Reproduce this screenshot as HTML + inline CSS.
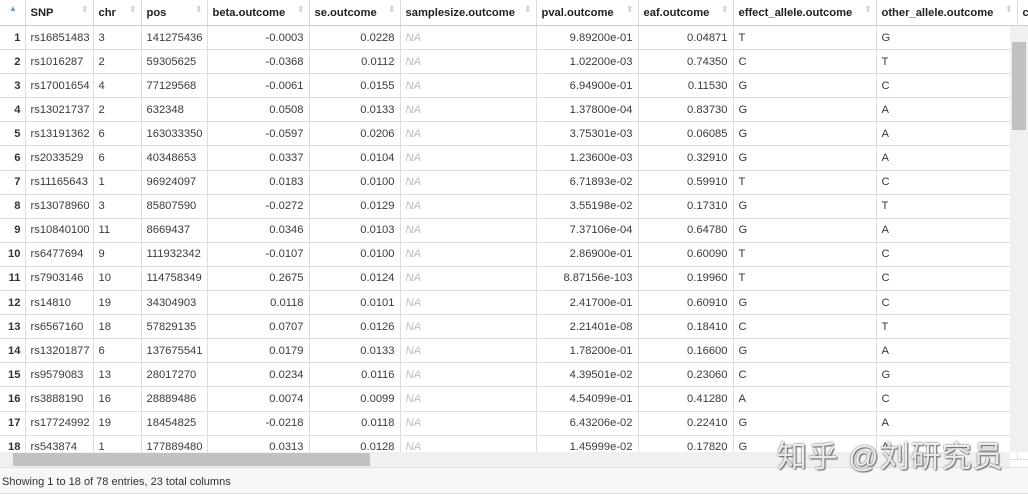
<!DOCTYPE html>
<html><head><meta charset="utf-8"><style>
body{margin:0;width:1028px;height:496px;overflow:hidden;background:#fff;font-family:"Liberation Sans","Noto Sans CJK SC",sans-serif;font-size:11.2px;color:#3a3a3a;position:relative}
table{border-collapse:collapse;table-layout:fixed;position:absolute;left:0;top:0;width:1040px}
td,th{height:23.1px;border-right:1px solid #ddd;border-bottom:1px solid #ddd;padding:0 5px;white-space:nowrap;overflow:hidden;text-align:left}
th{height:25px;font-weight:bold;color:#222;position:relative;border-bottom:1px solid #ccc}
th:after{content:"⬍";position:absolute;right:4px;top:4px;font-size:9px;color:#d0d0d0;font-weight:normal}
th.s:after{content:"▲";left:9px;font-size:8px;color:#5b9bd5}
td.n{text-align:right;font-weight:bold;color:#333;padding-right:4px}
td.r{text-align:right}
td.na{color:#bbb;font-style:italic}
.vs{position:absolute;left:1010px;top:26px;width:18px;height:426px;background:#f0f0f0}
.vs .t{position:absolute;left:2px;top:16px;width:14px;height:88px;background:#c1c1c1}
.hs{position:absolute;left:0;top:452px;width:1010px;height:15px;background:#f0f0f0}
.hs .t{position:absolute;left:13px;top:1px;width:357px;height:13px;background:#c1c1c1}
.ft{position:absolute;left:0;top:467px;width:1028px;height:25px;background:#f6f7f7;border-top:1px solid #e0e0e0;border-bottom:1px solid #ddd}
.ft span{position:absolute;left:2px;top:8px;font-size:11px;color:#333}
.wm{position:absolute;left:777px;top:432px;font-size:30px;color:rgba(255,255,255,.85);text-shadow:0 0 2px #555,1px 1px 1px #777;letter-spacing:1px}
</style></head><body>
<table>
<colgroup><col style="width:25px"><col style="width:68px"><col style="width:48px"><col style="width:66px"><col style="width:102px"><col style="width:91px"><col style="width:136px"><col style="width:102px"><col style="width:95px"><col style="width:143px"><col style="width:141px"><col style="width:23px"></colgroup>
<tr><th class="s"></th><th>SNP</th><th>chr</th><th>pos</th><th>beta.outcome</th><th>se.outcome</th><th>samplesize.outcome</th><th>pval.outcome</th><th>eaf.outcome</th><th>effect_allele.outcome</th><th>other_allele.outcome</th><th>c</th></tr>
<tr><td class="n">1</td><td>rs16851483</td><td>3</td><td>141275436</td><td class="r">-0.0003</td><td class="r">0.0228</td><td class="na">NA</td><td class="r">9.89200e-01</td><td class="r">0.04871</td><td>T</td><td>G</td><td></td></tr>
<tr><td class="n">2</td><td>rs1016287</td><td>2</td><td>59305625</td><td class="r">-0.0368</td><td class="r">0.0112</td><td class="na">NA</td><td class="r">1.02200e-03</td><td class="r">0.74350</td><td>C</td><td>T</td><td></td></tr>
<tr><td class="n">3</td><td>rs17001654</td><td>4</td><td>77129568</td><td class="r">-0.0061</td><td class="r">0.0155</td><td class="na">NA</td><td class="r">6.94900e-01</td><td class="r">0.11530</td><td>G</td><td>C</td><td></td></tr>
<tr><td class="n">4</td><td>rs13021737</td><td>2</td><td>632348</td><td class="r">0.0508</td><td class="r">0.0133</td><td class="na">NA</td><td class="r">1.37800e-04</td><td class="r">0.83730</td><td>G</td><td>A</td><td></td></tr>
<tr><td class="n">5</td><td>rs13191362</td><td>6</td><td>163033350</td><td class="r">-0.0597</td><td class="r">0.0206</td><td class="na">NA</td><td class="r">3.75301e-03</td><td class="r">0.06085</td><td>G</td><td>A</td><td></td></tr>
<tr><td class="n">6</td><td>rs2033529</td><td>6</td><td>40348653</td><td class="r">0.0337</td><td class="r">0.0104</td><td class="na">NA</td><td class="r">1.23600e-03</td><td class="r">0.32910</td><td>G</td><td>A</td><td></td></tr>
<tr><td class="n">7</td><td>rs11165643</td><td>1</td><td>96924097</td><td class="r">0.0183</td><td class="r">0.0100</td><td class="na">NA</td><td class="r">6.71893e-02</td><td class="r">0.59910</td><td>T</td><td>C</td><td></td></tr>
<tr><td class="n">8</td><td>rs13078960</td><td>3</td><td>85807590</td><td class="r">-0.0272</td><td class="r">0.0129</td><td class="na">NA</td><td class="r">3.55198e-02</td><td class="r">0.17310</td><td>G</td><td>T</td><td></td></tr>
<tr><td class="n">9</td><td>rs10840100</td><td>11</td><td>8669437</td><td class="r">0.0346</td><td class="r">0.0103</td><td class="na">NA</td><td class="r">7.37106e-04</td><td class="r">0.64780</td><td>G</td><td>A</td><td></td></tr>
<tr><td class="n">10</td><td>rs6477694</td><td>9</td><td>111932342</td><td class="r">-0.0107</td><td class="r">0.0100</td><td class="na">NA</td><td class="r">2.86900e-01</td><td class="r">0.60090</td><td>T</td><td>C</td><td></td></tr>
<tr><td class="n">11</td><td>rs7903146</td><td>10</td><td>114758349</td><td class="r">0.2675</td><td class="r">0.0124</td><td class="na">NA</td><td class="r">8.87156e-103</td><td class="r">0.19960</td><td>T</td><td>C</td><td></td></tr>
<tr><td class="n">12</td><td>rs14810</td><td>19</td><td>34304903</td><td class="r">0.0118</td><td class="r">0.0101</td><td class="na">NA</td><td class="r">2.41700e-01</td><td class="r">0.60910</td><td>G</td><td>C</td><td></td></tr>
<tr><td class="n">13</td><td>rs6567160</td><td>18</td><td>57829135</td><td class="r">0.0707</td><td class="r">0.0126</td><td class="na">NA</td><td class="r">2.21401e-08</td><td class="r">0.18410</td><td>C</td><td>T</td><td></td></tr>
<tr><td class="n">14</td><td>rs13201877</td><td>6</td><td>137675541</td><td class="r">0.0179</td><td class="r">0.0133</td><td class="na">NA</td><td class="r">1.78200e-01</td><td class="r">0.16600</td><td>G</td><td>A</td><td></td></tr>
<tr><td class="n">15</td><td>rs9579083</td><td>13</td><td>28017270</td><td class="r">0.0234</td><td class="r">0.0116</td><td class="na">NA</td><td class="r">4.39501e-02</td><td class="r">0.23060</td><td>C</td><td>G</td><td></td></tr>
<tr><td class="n">16</td><td>rs3888190</td><td>16</td><td>28889486</td><td class="r">0.0074</td><td class="r">0.0099</td><td class="na">NA</td><td class="r">4.54099e-01</td><td class="r">0.41280</td><td>A</td><td>C</td><td></td></tr>
<tr><td class="n">17</td><td>rs17724992</td><td>19</td><td>18454825</td><td class="r">-0.0218</td><td class="r">0.0118</td><td class="na">NA</td><td class="r">6.43206e-02</td><td class="r">0.22410</td><td>G</td><td>A</td><td></td></tr>
<tr><td class="n">18</td><td>rs543874</td><td>1</td><td>177889480</td><td class="r">0.0313</td><td class="r">0.0128</td><td class="na">NA</td><td class="r">1.45999e-02</td><td class="r">0.17820</td><td>G</td><td>A</td><td></td></tr>
</table>
<div class="vs"><div class="t"></div></div>
<div class="hs"><div class="t"></div></div>
<div class="ft"><span>Showing 1 to 18 of 78 entries, 23 total columns</span></div>
<div class="wm">知乎 @刘研究员</div>
</body></html>
